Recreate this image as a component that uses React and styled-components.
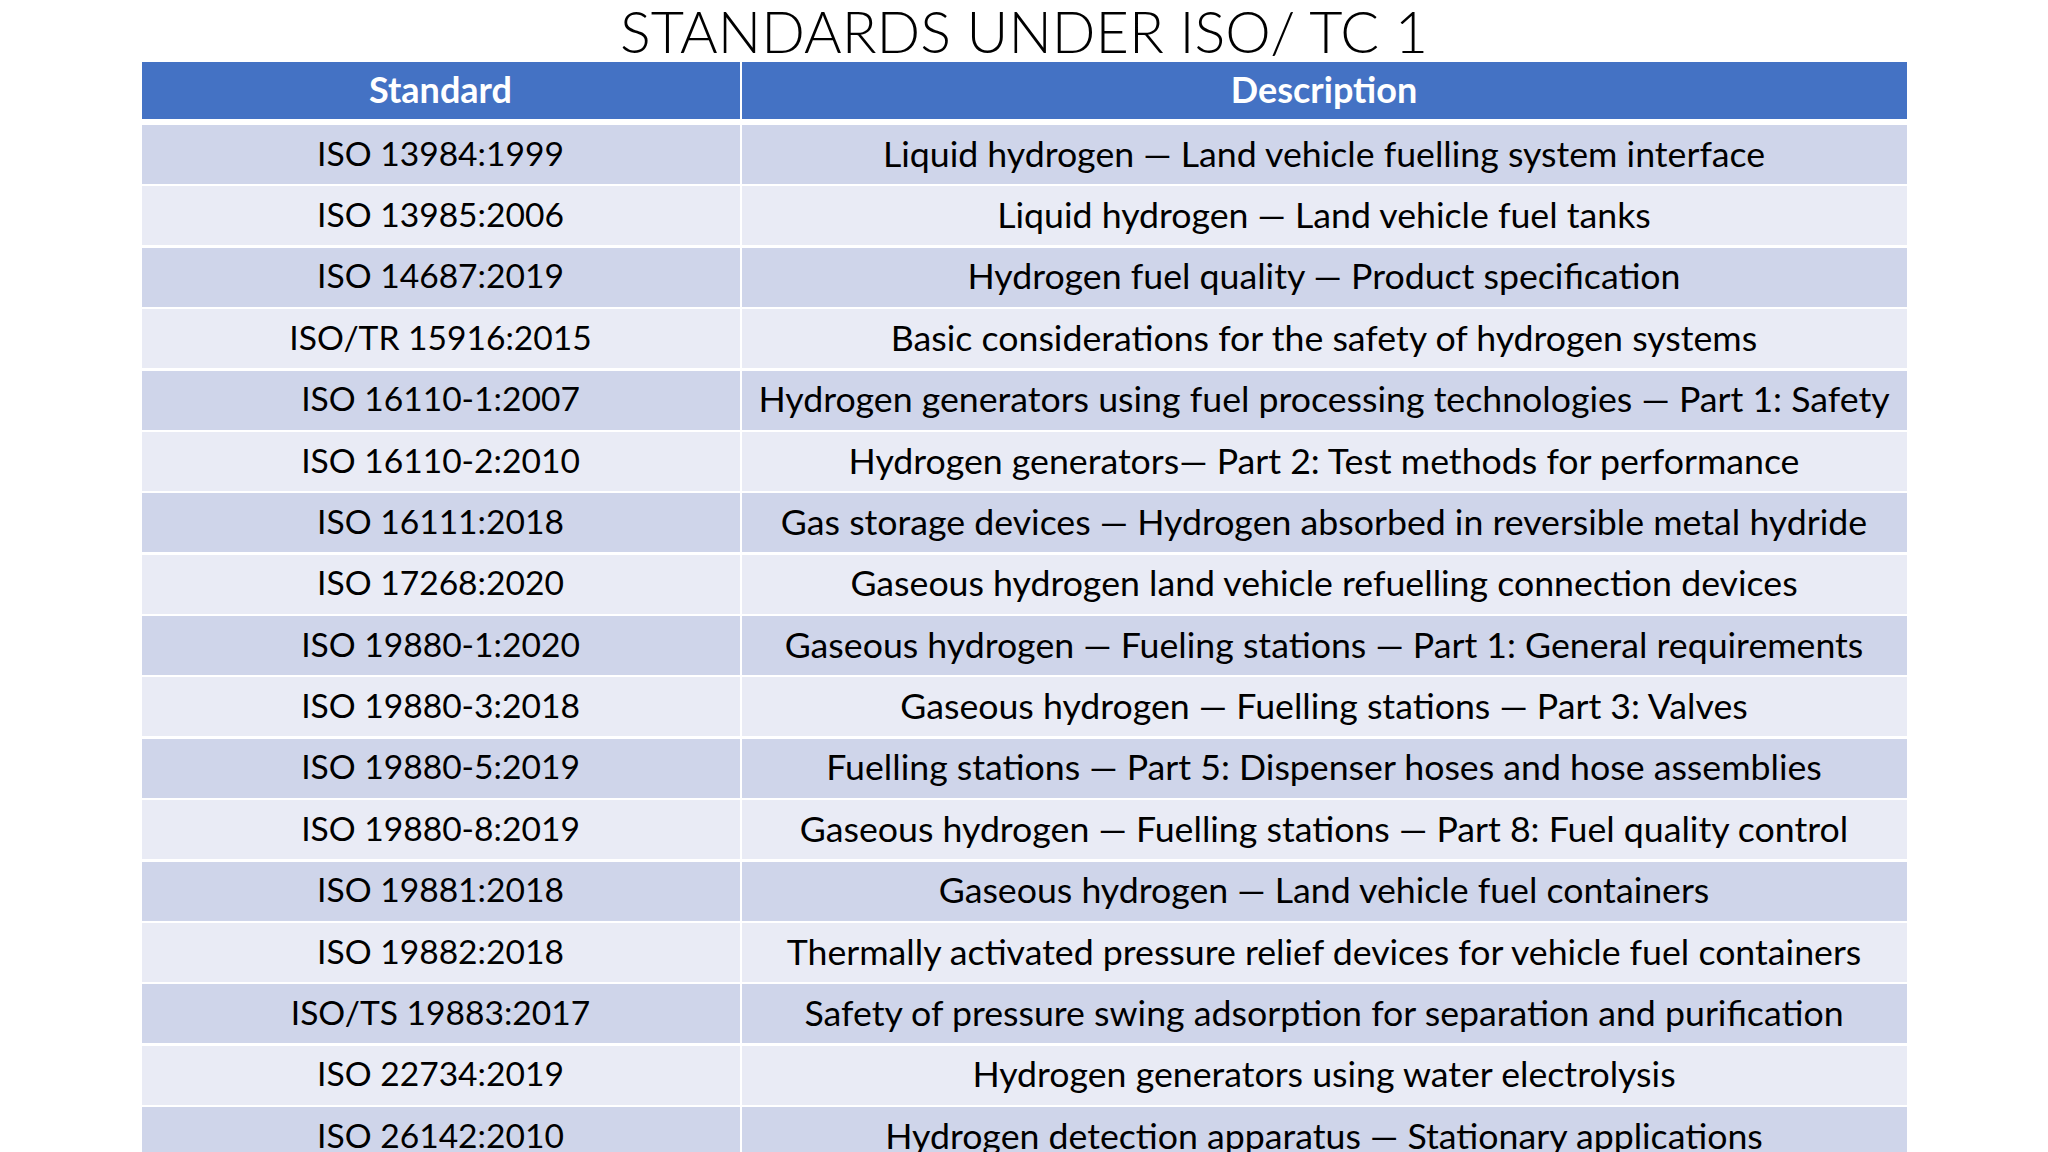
import React from "react";
import styled, { createGlobalStyle } from "styled-components";

const GlobalStyle = createGlobalStyle`
  html, body {
    margin: 0;
    padding: 0;
    background: #ffffff;
  }
  body {
    font-family: Lato, "Open Sans", sans-serif;
  }
`;

const Page = styled.div`
  width: 2048px;
  height: 1152px;
  overflow: hidden;
  background: #ffffff;
  display: flex;
  flex-direction: column;
  align-items: center;
`;

const Title = styled.h1`
  flex-shrink: 0;
  margin: 0;
  height: 62px;
  line-height: 61px;
  font-family: Lato, sans-serif;
  font-weight: 300;
  font-size: 57.5px;
  color: #000000;
  text-align: center;
  white-space: nowrap;
`;

const Table = styled.div`
  flex-shrink: 0;
  width: 1765px;
  display: flex;
  flex-direction: column;
  gap: 2.375px;
`;

const Row = styled.div`
  flex-shrink: 0;
  display: grid;
  grid-template-columns: 598px 1165px;
  column-gap: 2px;
  height: ${(p) => (p.$header ? "57px" : "59px")};
  margin-bottom: ${(p) => (p.$header ? "3.625px" : "0")};
`;

const Cell = styled.div`
  display: flex;
  align-items: center;
  justify-content: center;
  background: ${(p) =>
    p.$header ? "#4472c4" : p.$odd ? "#cfd5ea" : "#e9ebf5"};
  color: ${(p) => (p.$header ? "#ffffff" : "#000000")};
  font-family: Lato, sans-serif;
  font-weight: ${(p) => (p.$header ? 700 : 400)};
  font-size: ${(p) => (p.$header ? "36px" : p.$code ? "33.6px" : "35.7px")};
  line-height: 1;
  padding-bottom: ${(p) => (p.$header ? "4px" : "2px")};
  white-space: nowrap;
  box-sizing: border-box;
`;

const rows = [
  ["ISO 13984:1999", "Liquid hydrogen — Land vehicle fuelling system interface"],
  ["ISO 13985:2006", "Liquid hydrogen — Land vehicle fuel tanks"],
  ["ISO 14687:2019", "Hydrogen fuel quality — Product specification"],
  ["ISO/TR 15916:2015", "Basic considerations for the safety of hydrogen systems"],
  ["ISO 16110-1:2007", "Hydrogen generators using fuel processing technologies — Part 1: Safety"],
  ["ISO 16110-2:2010", "Hydrogen generators— Part 2: Test methods for performance"],
  ["ISO 16111:2018", "Gas storage devices — Hydrogen absorbed in reversible metal hydride"],
  ["ISO 17268:2020", "Gaseous hydrogen land vehicle refuelling connection devices"],
  ["ISO 19880-1:2020", "Gaseous hydrogen — Fueling stations — Part 1: General requirements"],
  ["ISO 19880-3:2018", "Gaseous hydrogen — Fuelling stations — Part 3: Valves"],
  ["ISO 19880-5:2019", "Fuelling stations — Part 5: Dispenser hoses and hose assemblies"],
  ["ISO 19880-8:2019", "Gaseous hydrogen — Fuelling stations — Part 8: Fuel quality control"],
  ["ISO 19881:2018", "Gaseous hydrogen — Land vehicle fuel containers"],
  ["ISO 19882:2018", "Thermally activated pressure relief devices for vehicle fuel containers"],
  ["ISO/TS 19883:2017", "Safety of pressure swing adsorption for separation and purification"],
  ["ISO 22734:2019", "Hydrogen generators using water electrolysis"],
  ["ISO 26142:2010", "Hydrogen detection apparatus — Stationary applications"],
];

export default function App() {
  return (
    <>
      <GlobalStyle />
      <Page>
        <Title>STANDARDS UNDER ISO/ TC 1</Title>
        <Table>
          <Row $header>
            <Cell $header>Standard</Cell>
            <Cell $header>Description</Cell>
          </Row>
          {rows.map(([std, desc], i) => (
            <Row key={std}>
              <Cell $odd={i % 2 === 0} $code>
                {std}
              </Cell>
              <Cell $odd={i % 2 === 0}>{desc}</Cell>
            </Row>
          ))}
        </Table>
      </Page>
    </>
  );
}
